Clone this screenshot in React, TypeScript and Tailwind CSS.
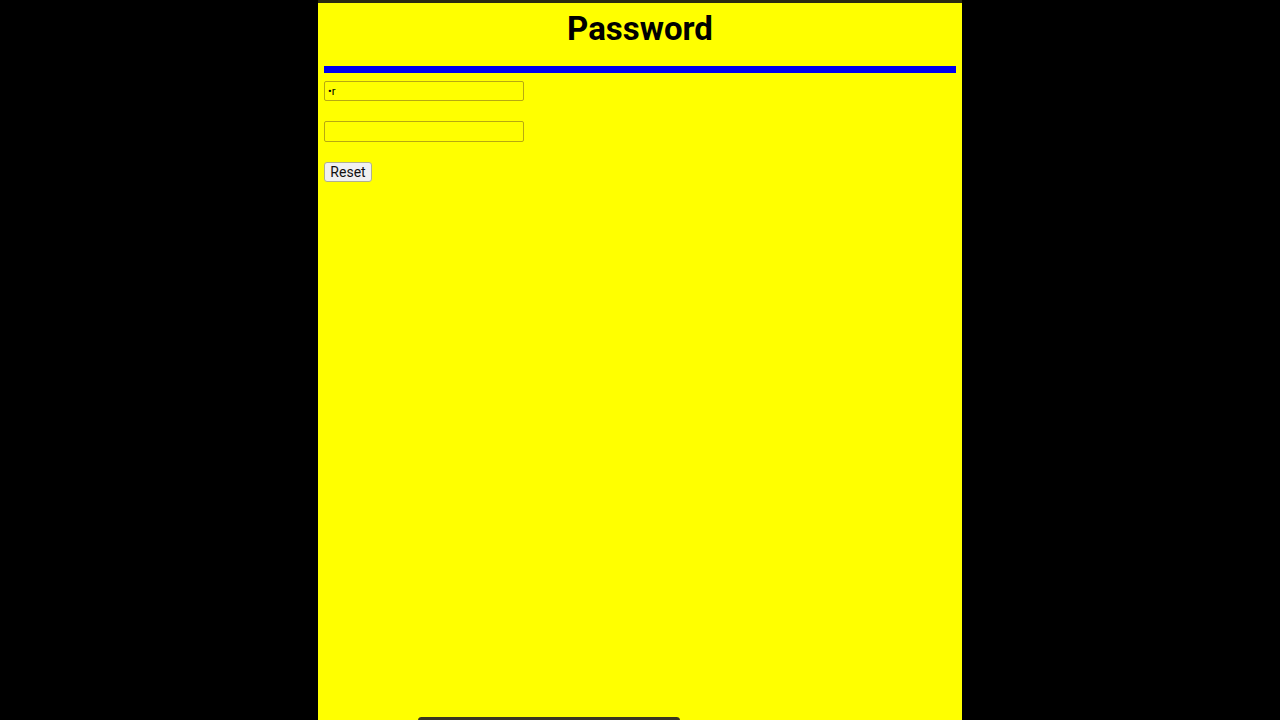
import React from "react";

export default function App() {
  return (
    <div className="w-[1280px] h-[720px] bg-black flex justify-center overflow-hidden" style={{ fontFamily: "Roboto, 'Liberation Sans', sans-serif" }}>
      <div className="relative w-[644px] h-[720px] bg-[#ffff00] flex flex-col">
        <div className="h-[3px] bg-[#2a2a10] w-full" />
        <h1 className="text-[33px] leading-[50px] font-bold text-black text-center mt-[1px]">Password</h1>
        <div className="mx-[6px] mt-[12px] h-[7px] bg-[#0000ee]" />
        <div className="px-[6px] pt-[8px] flex flex-col items-start">
          <div className="w-[200px] h-[20px] border border-[#b8aa10] rounded-[2px] flex items-center px-[3px] text-[11px] text-black leading-none">•r</div>
          <div className="w-[200px] h-[21px] border border-[#b8aa10] rounded-[2px] mt-[20px]" />
          <button className="mt-[20px] h-[20px] w-[48px] bg-[#f0f0f0] border border-[#b0b090] rounded-[3px] text-[14px] text-[#111] leading-none flex items-center justify-center">Reset</button>
        </div>
        <div className="absolute left-[100px] bottom-[-4px] w-[262px] h-[7px] rounded-full bg-[#3a3520]" />
      </div>
    </div>
  );
}
